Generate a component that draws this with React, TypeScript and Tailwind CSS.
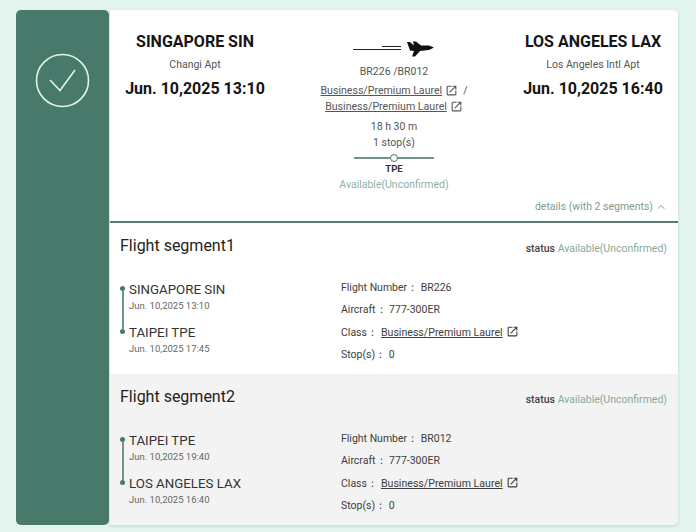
import { ChevronUp } from 'lucide-react'
import { MdOutlineOpenInNew } from 'react-icons/md'

interface Segment {
  title: string
  from: string
  fromTime: string
  to: string
  toTime: string
  flight: string
  shaded?: boolean
}

const segments: Segment[] = [
  {
    title: 'Flight segment1',
    from: 'SINGAPORE SIN',
    fromTime: 'Jun. 10,2025 13:10',
    to: 'TAIPEI TPE',
    toTime: 'Jun. 10,2025 17:45',
    flight: 'BR226',
  },
  {
    title: 'Flight segment2',
    from: 'TAIPEI TPE',
    fromTime: 'Jun. 10,2025 19:40',
    to: 'LOS ANGELES LAX',
    toTime: 'Jun. 10,2025 16:40',
    flight: 'BR012',
    shaded: true,
  },
]

function ClassLink() {
  return (
    <span className="inline-flex items-center gap-[3px] text-[10.6px]">
      <span className="underline">Business/Premium Laurel</span>
      <MdOutlineOpenInNew size={13} className="-mt-[2px]" />
    </span>
  )
}

function Endpoint({ city, airport, time }: { city: string; airport: string; time: string }) {
  return (
    <div className="flex flex-col items-center pt-[23px]">
      <div className="text-[16px] leading-[18px] font-bold text-[#151515]">{city}</div>
      <div className="mt-[7px] text-[10.5px] leading-[13px] text-[#555]">{airport}</div>
      <div className="mt-[8px] text-[16px] leading-[20px] font-bold text-[#151515]">{time}</div>
    </div>
  )
}

function SegmentRow({ segment }: { segment: Segment }) {
  return (
    <section className={`h-[151px] pr-[11px] pl-[10px] pt-[12px] ${segment.shaded ? 'bg-[#f3f3f3]' : 'bg-white'}`}>
      <div className="flex items-center justify-between">
        <h3 className="text-[16px] leading-[22px] text-[#222]">{segment.title}</h3>
        <div className="mt-[5px] text-[10.5px] leading-[14px]">
          <span className="font-medium text-[#444]">status</span>{' '}
          <span className="text-[#86a99c]">Available(Unconfirmed)</span>
        </div>
      </div>
      <div className="mt-[24px] flex items-start">
        <div className="flex w-[208px] shrink-0 items-start">
          <div className="mt-[5px] flex h-[48px] w-[5px] flex-col items-center">
            <div className="h-[5px] w-[5px] rounded-full bg-[#48796a]" />
            <div className="w-[2px] flex-1 bg-[#6f9586]" />
            <div className="h-[5px] w-[5px] rounded-full bg-[#48796a]" />
          </div>
          <div className="ml-[4px] flex flex-col">
            <div className="text-[13.3px] leading-[17px] text-[#333]">{segment.from}</div>
            <div className="mt-[2px] text-[9.5px] leading-[12px] text-[#666]">{segment.fromTime}</div>
            <div className="mt-[12px] text-[13.3px] leading-[17px] text-[#333]">{segment.to}</div>
            <div className="mt-[2px] text-[9.5px] leading-[12px] text-[#666]">{segment.toTime}</div>
          </div>
        </div>
        <div className="-mt-[1.5px] ml-[13px] flex flex-col gap-[6.6px] text-[10.5px] leading-[16px] text-[#3d3d3d]">
          <div>Flight Number： {segment.flight}</div>
          <div>Aircraft： 777-300ER</div>
          <div className="flex items-center">
            <span className="mr-[3px]">Class：</span>
            <ClassLink />
          </div>
          <div>Stop(s)： 0</div>
        </div>
      </div>
    </section>
  )
}

export default function App() {
  return (
    <div
      className="flex h-[532px] w-[696px] bg-[#e3f3ee] pt-[10px] pr-[18px] pb-[7px] pl-[16px]"
      style={{ fontFamily: 'Roboto, sans-serif' }}
    >
      {/* Status rail */}
      <aside className="mr-[1px] flex w-[93px] shrink-0 justify-center rounded-[5px] bg-[#48796a] pt-[43px]">
        <svg width="55" height="55" viewBox="0 0 55 55" fill="none" stroke="#e3f3ee" strokeWidth="1.6">
          <circle cx="27.5" cy="27.5" r="26" />
          <path d="M15 27 L25 37.5 L40 17" />
        </svg>
      </aside>

      <main className="flex-1 overflow-hidden rounded-r-[5px] bg-white shadow-[0_1px_3px_rgba(80,120,105,0.25)]">
        {/* Summary */}
        <div className="relative h-[213px] border-b-[2px] border-[#557d70]">
          <div className="grid grid-cols-[170px_1fr_170px]">
            <Endpoint city="SINGAPORE SIN" airport="Changi Apt" time="Jun. 10,2025 13:10" />
            <div className="flex flex-col items-center pt-[31px] text-[10.5px] text-[#555]">
              <svg width="82" height="16" viewBox="0 0 82 16" className="ml-[-1px]">
                <path d="M0 8.5h48M29 5.5h19" stroke="#222" strokeWidth="1.2" />
                <path
                  fill="#111"
                  d="M54 1h3l4 3.5-1-4h3l5 4h8l5 2-5 2.5-9 1-5 5.5h-3l2-5.5-4-.5z"
                />
              </svg>
              <div className="mt-[8px] leading-[14px]">BR226 /BR012</div>
              <div className="mt-[4px] flex items-center leading-[16px]">
                <ClassLink />
                <span className="ml-[5px]">/</span>
              </div>
              <div className="flex items-center leading-[16px]">
                <ClassLink />
              </div>
              <div className="mt-[4px] leading-[16px]">18 h 30 m</div>
              <div className="leading-[16px]">1 stop(s)</div>
              <div className="mt-[3px] flex w-[80px] items-center">
                <div className="h-[1.5px] flex-1 bg-[#6f9586]" />
                <div className="h-[8px] w-[8px] rounded-full border border-[#48796a] bg-white" />
                <div className="h-[1.5px] flex-1 bg-[#6f9586]" />
              </div>
              <div className="mt-[1px] text-[9.5px] leading-[12px] font-bold text-[#333]">TPE</div>
              <div className="mt-[3px] leading-[14px] text-[#8fb0a5]">Available(Unconfirmed)</div>
            </div>
            <Endpoint city="LOS ANGELES LAX" airport="Los Angeles Intl Apt" time="Jun. 10,2025 16:40" />
          </div>
          <div className="absolute right-[11px] bottom-[7px] flex items-center gap-[2px] text-[10.5px] leading-[14px] text-[#7f9a90]">
            details (with 2 segments)
            <ChevronUp size={12} />
          </div>
        </div>

        {segments.map((segment) => (
          <SegmentRow key={segment.title} segment={segment} />
        ))}
      </main>
    </div>
  )
}
